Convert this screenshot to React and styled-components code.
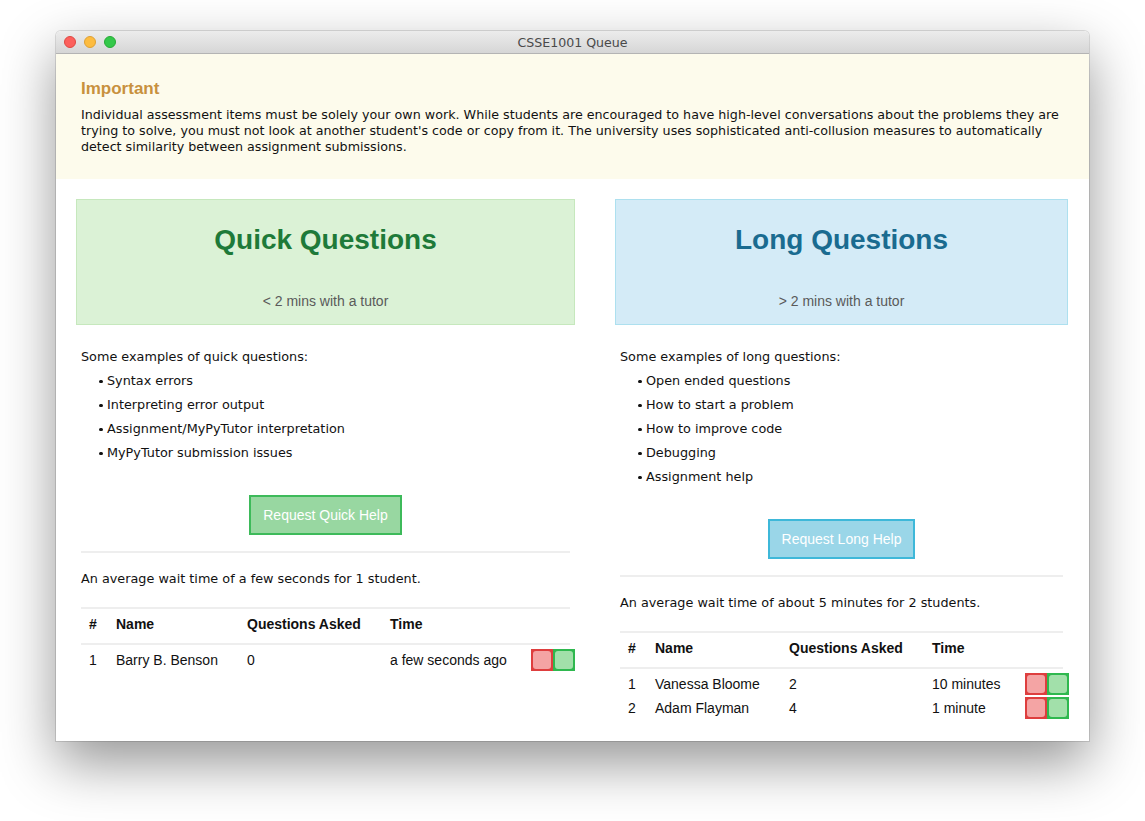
import React from "react";
import styled, { createGlobalStyle } from "styled-components";

const Global = createGlobalStyle`
  html, body { margin: 0; padding: 0; background: #ffffff; }
  body { font-family: "DejaVu Sans", "Liberation Sans", sans-serif; }
  * { box-sizing: border-box; }
`;

const Stage = styled.div`
  width: 1145px;
  height: 821px;
  padding: 31px 0 0 56px;
  overflow: hidden;
`;

const Window = styled.div`
  width: 1033px;
  height: 710px;
  background: #fff;
  border-radius: 5px 5px 0 0;
  box-shadow: 0 22px 55px rgba(0, 0, 0, 0.42), 0 0 0 1px rgba(0, 0, 0, 0.12);
  display: flex;
  flex-direction: column;
  overflow: hidden;
`;

const TitleBar = styled.div`
  height: 23px;
  flex: none;
  display: flex;
  align-items: center;
  position: relative;
  background: linear-gradient(#ececec, #d6d6d6);
  border-bottom: 1px solid #b4b4b4;
`;

const Lights = styled.div`
  display: flex;
  gap: 8px;
  padding-left: 8px;
`;

const Light = styled.span`
  width: 12px;
  height: 12px;
  border-radius: 50%;
  background: ${(p) => p.$c};
  border: 0.5px solid ${(p) => p.$b};
`;

const Title = styled.div`
  position: absolute;
  left: 0;
  right: 0;
  text-align: center;
  font-family: "DejaVu Sans", sans-serif;
  font-size: 12.6px;
  color: #4a4a4a;
  pointer-events: none;
`;

const Banner = styled.section`
  background: #fdfbec;
  padding: 25px 25px 24px;
`;

const BannerHeading = styled.h3`
  margin: 0 0 8px;
  font-family: "Liberation Sans", Arial, sans-serif;
  font-size: 17px;
  line-height: 20px;
  font-weight: bold;
  color: #c8913e;
`;

const BannerText = styled.p`
  margin: 0;
  font-size: 12.7px;
  line-height: 16px;
  color: #111;
`;

const Columns = styled.main`
  display: grid;
  grid-template-columns: 499px 453px;
  column-gap: 40px;
  padding: 20px 21px 0 20px;
`;

const Column = styled.div`
  display: flex;
  flex-direction: column;
  min-width: 0;
`;

const Panel = styled.div`
  background: ${(p) => (p.$kind === "quick" ? "#dbf2d6" : "#d4ebf7")};
  border: 1px solid ${(p) => (p.$kind === "quick" ? "#c6e8bd" : "#ade0ef")};
  padding: 23px 10px 14px;
  text-align: center;
  font-family: "Liberation Sans", Arial, sans-serif;
`;

const PanelTitle = styled.h1`
  margin: 0;
  font-size: 28px;
  line-height: 34px;
  font-weight: bold;
  color: ${(p) => (p.$kind === "quick" ? "#1e7a39" : "#1a6b90")};
`;

const PanelSub = styled.p`
  margin: 36px 0 0;
  font-size: 14px;
  line-height: 17px;
  color: #5a5a5a;
`;

const Body = styled.div`
  padding: 0 5px;
  display: flex;
  flex-direction: column;
`;

const Intro = styled.p`
  margin: 24px 0 0;
  font-size: 12.8px;
  line-height: 16px;
  color: #111;
`;

const List = styled.ul`
  margin: 0;
  padding: 0 0 0 18px;
  list-style: none;
`;

const Item = styled.li`
  margin-top: 8px;
  height: 16px;
  font-size: 12.8px;
  line-height: 16px;
  color: #111;
  &::before {
    content: "";
    display: inline-block;
    width: 3.5px;
    height: 3.5px;
    border-radius: 50%;
    background: #111;
    margin-right: 4.5px;
    vertical-align: middle;
  }
`;

const ButtonRow = styled.div`
  display: flex;
  justify-content: center;
  margin-top: 34px;
`;

const HelpButton = styled.button`
  font-family: "Liberation Sans", Arial, sans-serif;
  font-size: 14px;
  line-height: 18px;
  color: #fff;
  padding: 9px 12px;
  border: 2px solid ${(p) => (p.$kind === "quick" ? "#3dba5a" : "#3eb8d9")};
  background: ${(p) => (p.$kind === "quick" ? "#98d7a1" : "#9ad6e8")};
  border-radius: 0;
  cursor: pointer;
`;

const Rule = styled.hr`
  margin: 16px 0 0;
  border: none;
  height: 2px;
  background: #eeeeee;
`;

const Wait = styled.p`
  margin: 18px 0 0;
  font-size: 12.8px;
  line-height: 16px;
  color: #111;
`;

const Table = styled.table`
  margin-top: 20px;
  width: 100%;
  border-collapse: collapse;
  table-layout: fixed;
  font-family: "Liberation Sans", Arial, sans-serif;
  font-size: 14px;
  color: #111;
`;

const Col = styled.col`
  width: ${(p) => p.$w}px;
`;

const Th = styled.th`
  text-align: left;
  font-weight: bold;
  line-height: 17px;
  padding: 7px 8px 10px;
  border-top: 2px solid #eeeeee;
  border-bottom: 2px solid #eeeeee;
  white-space: nowrap;
`;

const Tr = styled.tr`
  &:first-child td {
    padding-top: 4px;
  }
`;

const Td = styled.td`
  padding: 1px 8px;
  line-height: 22px;
  white-space: nowrap;
  vertical-align: middle;
`;

const Actions = styled.div`
  display: flex;
  width: 44px;
`;

const Square = styled.button`
  width: 22px;
  height: 22px;
  padding: 0;
  border: 2px solid ${(p) => (p.$ok ? "#2fb84f" : "#de3e3e")};
  background: ${(p) => (p.$ok ? "#2fb84f" : "#de3e3e")};
  cursor: pointer;
  display: flex;
  &::after {
    content: "";
    flex: 1;
    border-radius: 3px;
    background: ${(p) => (p.$ok ? "#a2e0aa" : "#f4a4a4")};
  }
`;

const queues = [
  {
    kind: "quick",
    title: "Quick Questions",
    sub: "< 2 mins with a tutor",
    intro: "Some examples of quick questions:",
    items: [
      "Syntax errors",
      "Interpreting error output",
      "Assignment/MyPyTutor interpretation",
      "MyPyTutor submission issues",
    ],
    button: "Request Quick Help",
    wait: "An average wait time of a few seconds for 1 student.",
    cols: [27, 131, 143, 141, 47],
    rows: [["1", "Barry B. Benson", "0", "a few seconds ago"]],
  },
  {
    kind: "long",
    title: "Long Questions",
    sub: "> 2 mins with a tutor",
    intro: "Some examples of long questions:",
    items: [
      "Open ended questions",
      "How to start a problem",
      "How to improve code",
      "Debugging",
      "Assignment help",
    ],
    button: "Request Long Help",
    wait: "An average wait time of about 5 minutes for 2 students.",
    cols: [27, 134, 143, 93, 46],
    rows: [
      ["1", "Vanessa Bloome", "2", "10 minutes"],
      ["2", "Adam Flayman", "4", "1 minute"],
    ],
  },
];

function Queue({ q }) {
  return (
    <Column>
      <Panel $kind={q.kind}>
        <PanelTitle $kind={q.kind}>{q.title}</PanelTitle>
        <PanelSub>{q.sub}</PanelSub>
      </Panel>
      <Body>
        <Intro>{q.intro}</Intro>
        <List>
          {q.items.map((t) => (
            <Item key={t}>{t}</Item>
          ))}
        </List>
        <ButtonRow>
          <HelpButton $kind={q.kind}>{q.button}</HelpButton>
        </ButtonRow>
        <Rule />
        <Wait>{q.wait}</Wait>
        <Table>
          <colgroup>
            {q.cols.map((w, i) => (
              <Col key={i} $w={w} />
            ))}
          </colgroup>
          <thead>
            <tr>
              <Th>#</Th>
              <Th>Name</Th>
              <Th>Questions Asked</Th>
              <Th>Time</Th>
              <Th />
            </tr>
          </thead>
          <tbody>
            {q.rows.map((r) => (
              <Tr key={r[0]}>
                {r.map((c, i) => (
                  <Td key={i}>{c}</Td>
                ))}
                <Td>
                  <Actions>
                    <Square aria-label="remove" />
                    <Square $ok aria-label="done" />
                  </Actions>
                </Td>
              </Tr>
            ))}
          </tbody>
        </Table>
      </Body>
    </Column>
  );
}

export default function App() {
  return (
    <>
      <Global />
      <Stage>
        <Window>
          <TitleBar>
            <Lights>
              <Light $c="#fc605c" $b="#de4841" />
              <Light $c="#fdbc40" $b="#dea033" />
              <Light $c="#34c84a" $b="#27aa35" />
            </Lights>
            <Title>CSSE1001 Queue</Title>
          </TitleBar>
          <Banner>
            <BannerHeading>Important</BannerHeading>
            <BannerText>
              Individual assessment items must be solely your own work. While
              students are encouraged to have high-level conversations about
              the problems they are trying to solve, you must not look at
              another student's code or copy from it. The university uses
              sophisticated anti-collusion measures to automatically detect
              similarity between assignment submissions.
            </BannerText>
          </Banner>
          <Columns>
            {queues.map((q) => (
              <Queue key={q.kind} q={q} />
            ))}
          </Columns>
        </Window>
      </Stage>
    </>
  );
}
